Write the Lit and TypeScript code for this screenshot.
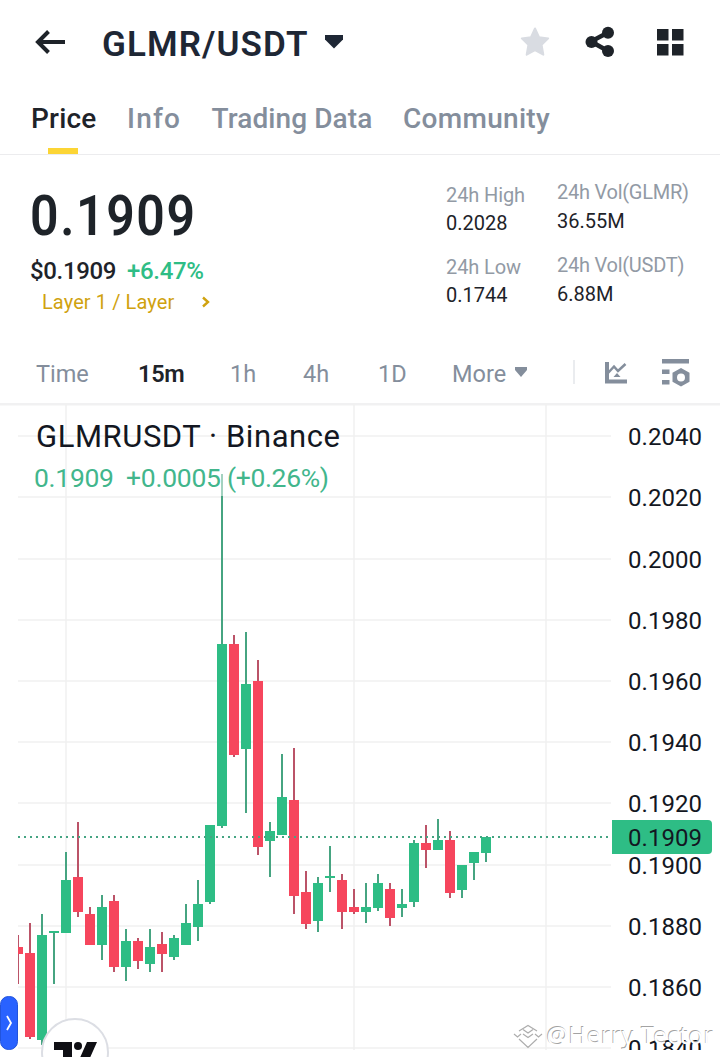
import { LitElement, html, css, svg } from "lit";
import { customElement } from "lit/decorators.js";
import { classMap } from "lit/directives/class-map.js";

// x, body top, body bottom, wick top, wick bottom, rising
type Candle = [number, number, number, number, number, boolean];

const CANDLES: Candle[] = [
  [18, 947, 954, 935, 984, false],
  [30, 953, 1037, 923, 1039, false],
  [42, 935, 1040, 914, 1045, true],
  [54, 931, 933, 931, 984, true],
  [66, 880, 933, 852, 933, true],
  [78, 877, 912, 822, 917, false],
  [90, 914, 945, 907, 945, false],
  [102, 907, 945, 895, 960, true],
  [114, 901, 967, 895, 972, false],
  [126, 941, 967, 929, 981, true],
  [138, 941, 961, 938, 969, false],
  [150, 947, 964, 929, 972, true],
  [162, 944, 954, 932, 972, false],
  [174, 938, 957, 935, 960, true],
  [186, 923, 945, 904, 945, true],
  [198, 904, 927, 880, 941, true],
  [210, 825, 902, 825, 904, true],
  [222, 644, 826, 474, 828, true],
  [234, 644, 755, 635, 757, false],
  [246, 684, 749, 632, 813, true],
  [258, 681, 847, 660, 855, false],
  [270, 831, 841, 822, 877, true],
  [282, 797, 835, 754, 835, true],
  [294, 800, 896, 748, 914, false],
  [306, 892, 924, 871, 929, false],
  [318, 883, 921, 877, 932, true],
  [330, 876, 878, 846, 892, true],
  [342, 880, 912, 874, 929, false],
  [354, 907, 912, 889, 914, false],
  [366, 907, 912, 883, 923, true],
  [378, 883, 908, 874, 911, true],
  [390, 889, 918, 883, 926, false],
  [402, 904, 908, 889, 917, true],
  [414, 843, 902, 840, 907, true],
  [426, 843, 850, 825, 868, false],
  [438, 840, 850, 819, 850, true],
  [450, 840, 893, 831, 898, false],
  [462, 865, 890, 865, 898, true],
  [474, 852, 863, 852, 880, true],
  [486, 837, 853, 837, 862, true],
];

const LEVELS: [string, number][] = [
  ["0.2040", 436], ["0.2020", 497], ["0.2000", 559], ["0.1980", 620],
  ["0.1960", 681], ["0.1940", 742], ["0.1920", 803], ["0.1900", 865],
  ["0.1880", 926], ["0.1860", 987], ["0.1840", 1048],
];

@customElement("top-bar")
class TopBar extends LitElement {
  static styles = css`
    :host { display: block; }
    .bar {
      height: 84px; box-sizing: border-box; padding-left: 34px;
      display: grid; grid-template-columns: 68px 222px 195px 65px 71px 30px;
      align-items: center; color: #1e2329;
    }
    .icon { display: block; }
    .pair { font-size: 35px; line-height: 40px; font-weight: 600; letter-spacing: 1.1px; color: #1e2735; padding-top: 5px; white-space: nowrap; }
  `;
  render() {
    return html`
      <div class="bar">
        <svg class="icon" width="32" height="28" viewBox="0 0 32 28">
          <path d="M14.500 3.500 4 14l10.500 10.500M4 14h27" fill="none" stroke="#1e2329" stroke-width="4"/>
        </svg>
        <div class="pair">GLMR/USDT</div>
        <svg class="icon" width="22" height="16" viewBox="0 0 22 16">
          <path d="M1 1h18v4.500l-9 9-9-9z" fill="#1e2735"/>
        </svg>
        <svg class="icon" width="32" height="32" viewBox="0 0 32 32">
          <path d="M16 2.500l4 8.700 9.200 1.200-6.600 6.500 1.700 9.800-8.300-4.500-8.300 4.500 1.700-9.800-6.600-6.500 9.200-1.200z" fill="#d9dce2" stroke="#d9dce2" stroke-width="2" stroke-linejoin="round"/>
        </svg>
        <svg class="icon" width="32" height="32" viewBox="0 0 32 32">
          <path d="M24 6.500 7 15.500l17 9.500" fill="none" stroke="#1e2329" stroke-width="4.500"/>
          <g fill="#1e2329"><circle cx="7.500" cy="16" r="6"/><circle cx="24" cy="6.800" r="6"/><circle cx="24" cy="25" r="6"/></g>
        </svg>
        <svg class="icon" width="30" height="30" viewBox="0 0 30 30">
          <path d="M2 2h11.500v11.500H2zM17 2h11.500v11.500H17zM2 17h11.500v11.500H2zM17 17h11.500v11.500H17z" fill="#1e2329"/>
        </svg>
      </div>`;
  }
}

@customElement("tab-strip")
class TabStrip extends LitElement {
  static styles = css`
    :host { display: block; }
    .tabs {
      height: 71px; box-sizing: border-box; border-bottom: 1px solid #ececee; padding-left: 31px;
      display: grid; grid-template-columns: 96px 84.500px 191.500px 160px; align-items: stretch;
      font-size: 28px; font-weight: 500; color: #848e9c;
    }
    .tab { display: flex; flex-direction: column; justify-content: space-between; padding-top: 18px; line-height: 34px; white-space: nowrap; }
    .active { color: #1e2329; }
    .mark { width: 30px; height: 6px; background: #fcd535; margin-left: 17px; }
    .s0 { letter-spacing: 0.200px; } .s1 { letter-spacing: 1.200px; }
    .s2 { letter-spacing: 0.100px; } .s3 { letter-spacing: 0.300px; }
  `;
  render() {
    return html`<div class="tabs">
      ${["Price", "Info", "Trading Data", "Community"].map((t, i) => html`
        <div class=${classMap({ tab: true, active: i === 0, [`s${i}`]: true })}>
          <span>${t}</span>${i === 0 ? html`<div class="mark"></div>` : ""}
        </div>`)}
    </div>`;
  }
}

@customElement("ticker-summary")
class TickerSummary extends LitElement {
  static styles = css`
    :host { display: block; }
    .summary { height: 190px; box-sizing: border-box; display: grid; grid-template-columns: 416px 111px 150px; padding-left: 30px; white-space: nowrap; }
    .last { font-size: 55.500px; line-height: 60px; font-weight: 600; letter-spacing: 1.800px; color: #1e2329; padding-top: 32px; transform: scaleX(0.9); transform-origin: 0 0; }
    .fiat { display: flex; gap: 11px; font-size: 24px; line-height: 28px; font-weight: 500; letter-spacing: -0.350px; color: #1e2329; padding-top: 10px; }
    .up { color: #2ebd85; }
    .tag { display: flex; align-items: center; gap: 27px; font-size: 20px; line-height: 24px; letter-spacing: 0.100px; color: #d0a20f; padding: 5px 0 0 12px; }
    .col { display: flex; flex-direction: column; padding-top: 28px; }
    .wide { padding-top: 25px; }
    .label { font-size: 20px; line-height: 24px; color: #929aa5; letter-spacing: -0.100px; }
    .wide .label { letter-spacing: -0.250px; }
    .value { font-size: 20px; line-height: 24px; color: #1e2329; letter-spacing: 0; padding: 4px 0 20px; }
    .wide .value { padding: 5px 0 20px; }
  `;
  render() {
    return html`<div class="summary">
      <div>
        <div class="last">0.1909</div>
        <div class="fiat"><span>$0.1909</span><span class="up">+6.47%</span></div>
        <div class="tag"><span>Layer 1 / Layer</span>
          <svg width="10" height="12" viewBox="0 0 10 12"><path d="M2 1.500 7 6l-5 4.500" fill="none" stroke="#d0a20f" stroke-width="2.400"/></svg>
        </div>
      </div>
      <div class="col">
        <div class="label">24h High</div><div class="value">0.2028</div>
        <div class="label">24h Low</div><div class="value">0.1744</div>
      </div>
      <div class="col wide">
        <div class="label">24h Vol(GLMR)</div><div class="value">36.55M</div>
        <div class="label">24h Vol(USDT)</div><div class="value">6.88M</div>
      </div>
    </div>`;
  }
}

@customElement("interval-bar")
class IntervalBar extends LitElement {
  static styles = css`
    :host { display: block; }
    .row {
      height: 58px; padding-left: 36px; display: grid; align-items: center; white-space: nowrap;
      grid-template-columns: 102px 92px 73px 75px 74px 62px 59px 31px 57px 32px;
      font-size: 23.500px; line-height: 28px; color: #848e9c;
    }
    .on { color: #1e2329; font-weight: 600; letter-spacing: -0.300px; }
    .rule { width: 2px; height: 24px; margin-bottom: 4px; background: #eaecef; }
    .icon { display: block; margin-bottom: 2px; }
    .caret { display: block; margin-bottom: 4px; }
    .more { letter-spacing: 0; }
  `;
  render() {
    return html`<div class="row">
      <span>Time</span><span class="on">15m</span><span>1h</span><span>4h</span><span>1D</span>
      <span class="more">More</span>
      <svg class="caret" width="14" height="12" viewBox="0 0 14 12"><path d="M1 1h12v3L7 11 1 4z" fill="#848e9c"/></svg>
      <div class="rule"></div>
      <svg class="icon" width="24" height="26" viewBox="0 0 24 26">
        <path d="M3 2v19.500H23" fill="none" stroke="#848e9c" stroke-width="4"/>
        <path d="M4 13l6-6.500 4 4.500 7.500-7" fill="none" stroke="#848e9c" stroke-width="2.500"/>
        <path d="M9.500 17l3.500-4 3.500 4z" fill="#848e9c"/>
      </svg>
      <svg class="icon" width="30" height="30" viewBox="0 0 30 30">
        <path d="M1 1h27v4.500H1zM1 11.500h7.500v4.500H1zM1 22h7.500v4.500H1z" fill="#848e9c"/>
        <path fill-rule="evenodd" d="M20 10l8.500 4.700v9L20 28.500l-8.500-4.800v-9zM20 15.500a4 4 0 1 0 0 8 4 4 0 0 0 0-8z" fill="#848e9c"/>
      </svg>
    </div>`;
  }
}

@customElement("price-chart")
class PriceChart extends LitElement {
  static styles = css`
    :host { display: block; }
    .chart { display: block; font-family: Roboto, sans-serif; }
    .grid { stroke: #f0f0f1; stroke-width: 1.500; }
    .axis { font-size: 24px; fill: #131722; }
    .legend { font-size: 31px; fill: #131722; }
    .quote { font-size: 26.500px; fill: #42b68c; }
    .mark { font-family: "Noto Sans", sans-serif; font-size: 24px; }
  `;
  render() {
    const glyph = "M519 1031l9-5.500 9 5.500M523 1029.500l5 3.500 5-3.500M514 1034l3.500 3 3.500-3M535 1034l3.500 3 3.500-3M523 1034l5 3.500 5-3.500M519 1039l9 8.500 9-8.500";
    return html`<svg class="chart" width="720" height="654" viewBox="0 403 720 654">
      <defs>
        <clipPath id="plot"><rect x="18" y="403" width="702" height="647"/></clipPath>
        <clipPath id="page"><rect x="0" y="403" width="720" height="654"/></clipPath>
      </defs>
      <rect x="0" y="403" width="720" height="2.500" fill="#f1f1f2"/>
      <g clip-path="url(#plot)">
        ${LEVELS.map(([, y]) => svg`<line class="grid" x1="18" x2="611" y1=${y} y2=${y}/>`)}
        ${[66, 354, 546].map((x) => svg`<line class="grid" x1=${x} x2=${x} y1="403" y2="1050"/>`)}
        ${CANDLES.map(([x, top, bottom, high, low, up]) => svg`
          <rect x=${x - 1} y=${high} width="2" height=${low - high} fill=${up ? "#46a481" : "#bb5368"}/>
          <rect x=${x - 5} y=${top} width="10" height=${bottom - top} fill=${up ? "#2ebd85" : "#f6465d"}/>`)}
        <line x1="18" x2="611" y1="837" y2="837" stroke="#45a482" stroke-width="2" stroke-dasharray="2 4"/>
        <rect x="217" y="470" width="10" height="26" fill="#fff" fill-opacity="0.500"/>
        ${LEVELS.map(([t, y]) => svg`<text class="axis" x="628" y=${y + 9} textLength="74">${t}</text>`)}
      </g>
      <path d="M612 820h96a4 4 0 0 1 4 4v26a4 4 0 0 1-4 4h-96z" fill="#2ebd85"/>
      <text class="axis" x="628" y="846" textLength="74">0.1909</text>
      <text class="legend" x="36" y="447" textLength="304">GLMRUSDT · Binance</text>
      <g class="quote">
        <text x="34" y="487" textLength="80">0.1909</text>
        <text x="126" y="487" textLength="95">+0.0005</text>
        <text x="227" y="487" textLength="102">(+0.26%)</text>
      </g>
      <g clip-path="url(#page)">
        <circle cx="75" cy="1052" r="33" fill="#fff" stroke="#dcdee4" stroke-width="2"/>
        <path d="M54 1042h18v18h-9v-10h-9zM87 1042h10l-8 18H79z" fill="#0f0f14"/>
        <circle cx="78" cy="1046" r="4" fill="#0f0f14"/>
      </g>
      <rect x="0.500" y="996.500" width="17" height="53" rx="8" fill="#2962ff" stroke="#2254dc"/>
      <path d="M7 1016l4 7-4 7" fill="none" stroke="#fff" stroke-width="1.800"/>
      <g class="mark">
        <path d=${glyph} fill="none" stroke="#adadad" stroke-width="1.200"/>
        <text x="545.800" y="1042.800" textLength="167" fill="#a3a3a3">@Herry Tector</text>
        <text x="546.500" y="1043.500" textLength="167" fill="#fff">@Herry Tector</text>
      </g>
    </svg>`;
  }
}

@customElement("app-root")
class AppRoot extends LitElement {
  static styles = css`
    :host { display: block; width: 720px; height: 1057px; overflow: hidden; background: #fff; font-family: Roboto, sans-serif; }
  `;
  render() {
    return html`
      <top-bar></top-bar>
      <tab-strip></tab-strip>
      <ticker-summary></ticker-summary>
      <interval-bar></interval-bar>
      <price-chart></price-chart>`;
  }
}
